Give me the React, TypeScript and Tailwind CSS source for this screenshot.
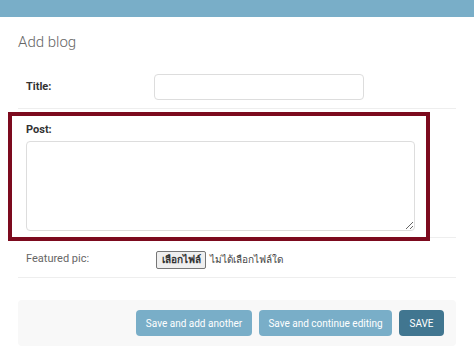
export default function App() {
  return (
    <div className="min-h-screen w-full bg-white font-['Roboto','Liberation_Sans',sans-serif]">
      <div className="h-[17px] bg-[#79aec8]" />

      <div className="px-[18px]">
        <h1 className="mt-[15px] text-[15px] leading-[20px] font-light text-[#666]">Add blog</h1>

        <div className="mt-[14px] flex items-center border-b border-[#eee] py-[8px]">
          <label className="w-[136px] pl-[8px] text-[11px] font-bold text-[#333]">Title:</label>
          <input type="text" className="h-[26px] w-[210px] rounded-[4px] border border-[#ddd] bg-white" />
        </div>

        <div className="border-b border-[#eee]">
          <div className="mt-[3px] -mb-[4px] -ml-[10px] w-[422px] border-4 border-[#7c0a1e] pt-[7px] pb-[6px] pl-[14px]">
            <label className="block text-[11px] leading-[14px] font-bold text-[#333]">Post:</label>
            <textarea className="mt-[4px] block h-[90px] w-[389px] rounded-[4px] border border-[#ddd] bg-white" />
          </div>
        </div>

        <div className="flex h-[40px] items-center border-b border-[#eee] pt-[4px]">
          <label className="w-[138px] pl-[8px] text-[11px] text-[#666]">Featured pic:</label>
          <div className="flex items-center gap-[4px] text-[10px] text-[#444]">
            <button className="h-[18px] w-[50px] rounded-[2px] border border-[#767676] bg-[#efefef] text-[10px] font-semibold text-[#333]">
              เลือกไฟล์
            </button>
            <span>ไม่ได้เลือกไฟล์ใด</span>
          </div>
        </div>

        <div className="mt-[22px] flex h-[46px] items-center justify-end gap-[7px] rounded-[4px] bg-[#f8f8f8] pr-[12px]">
          <button className="h-[26px] w-[116px] whitespace-nowrap rounded-[4px] bg-[#79aec8] text-[10px] text-white">
            Save and add another
          </button>
          <button className="h-[26px] w-[133px] whitespace-nowrap rounded-[4px] bg-[#79aec8] text-[10px] text-white">
            Save and continue editing
          </button>
          <button className="h-[26px] w-[45px] whitespace-nowrap rounded-[4px] bg-[#417690] text-[10px] text-white">
            SAVE
          </button>
        </div>
      </div>
    </div>
  );
}
